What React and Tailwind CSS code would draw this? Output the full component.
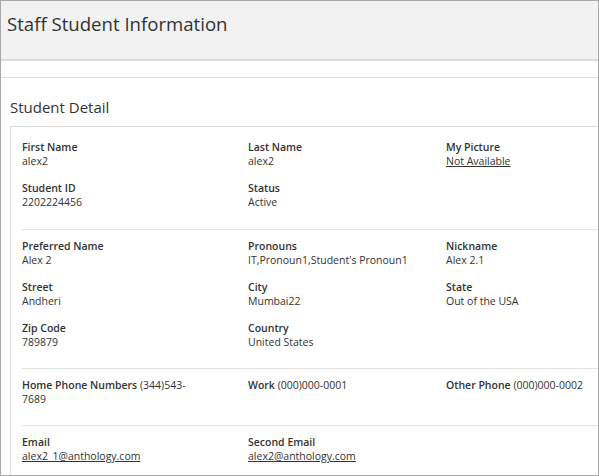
import React from 'react';

const Field = ({ label, value, link }) => (
  <div className="mb-[13px]">
    <div className="font-semibold">{label}</div>
    <div>
      {link ? <a className="underline">{value}</a> : value || '\u00a0'}
    </div>
  </div>
);

const Section = ({ columns, last }) => (
  <div className={`pt-[9px] pb-[6px] ${last ? '' : 'border-b border-[#e3e3e3]'}`}>
    <div className="grid grid-cols-[226px_198px_1fr]">
      {columns.map((col, i) => (
        <div key={i} className="pr-[24px]">
          {col.map((f) => (
            <Field key={f.label} {...f} />
          ))}
        </div>
      ))}
    </div>
  </div>
);

const InlineField = ({ label, value }) => (
  <div className="mb-[13px]">
    <span className="font-semibold">{label}</span> {value}
  </div>
);

export default function App() {
  return (
    <div className="w-[599px] h-[476px] border border-[#a9a9a9] overflow-hidden bg-white text-[#333] font-['Open_Sans',sans-serif]">
      {/* Page header */}
      <div className="h-[60px] bg-[#f2f2f2] border-b-2 border-[#dcdcdc] px-[6px] pt-[9px]">
        <h1 className="text-[18.6px] leading-[28px] text-[#333]">Staff Student Information</h1>
      </div>
      <div className="h-[17px] border-b border-[#dcdcdc]" />

      <h2 className="px-[9px] pt-[18px] pb-[8px] text-[15px] leading-[22px]">Student Detail</h2>

      {/* Detail card */}
      <div className="ml-[9px] w-[620px] border border-[#dcdcdc] pl-[11px] text-[10.5px] leading-[14px]">
        <div className="pt-[13px] pb-[7px] border-b border-[#e3e3e3]">
          <div className="grid grid-cols-[226px_198px_1fr]">
            <div className="pr-[24px]">
              <Field label="First Name" value="alex2" />
              <Field label="Student ID" value="2202224456" />
            </div>
            <div className="pr-[24px]">
              <Field label="Last Name" value="alex2" />
              <Field label="Status" value="Active" />
            </div>
            <div>
              <Field label="My Picture" value="Not Available" link />
            </div>
          </div>
        </div>

        <Section
          columns={[
            [
              { label: 'Preferred Name', value: 'Alex 2' },
              { label: 'Street', value: 'Andheri' },
              { label: 'Zip Code', value: '789879' },
            ],
            [
              { label: 'Pronouns', value: "IT,Pronoun1,Student's Pronoun1" },
              { label: 'City', value: 'Mumbai22' },
              { label: 'Country', value: 'United States' },
            ],
            [
              { label: 'Nickname', value: 'Alex 2.1' },
              { label: 'State', value: 'Out of the USA' },
            ],
          ]}
        />

        <div className="pt-[9px] pb-[6px] border-b border-[#e3e3e3]">
          <div className="grid grid-cols-[226px_198px_1fr]">
            <div className="pr-[54px]">
              <InlineField label="Home Phone Numbers" value="(344)543-7689" />
            </div>
            <div className="pr-[24px]">
              <InlineField label="Work" value="(000)000-0001" />
            </div>
            <div>
              <InlineField label="Other Phone" value="(000)000-0002" />
            </div>
          </div>
        </div>

        <Section
          last
          columns={[
            [{ label: 'Email', value: 'alex2_1@anthology.com', link: true }],
            [{ label: 'Second Email', value: 'alex2@anthology.com', link: true }],
            [],
          ]}
        />
      </div>
    </div>
  );
}
